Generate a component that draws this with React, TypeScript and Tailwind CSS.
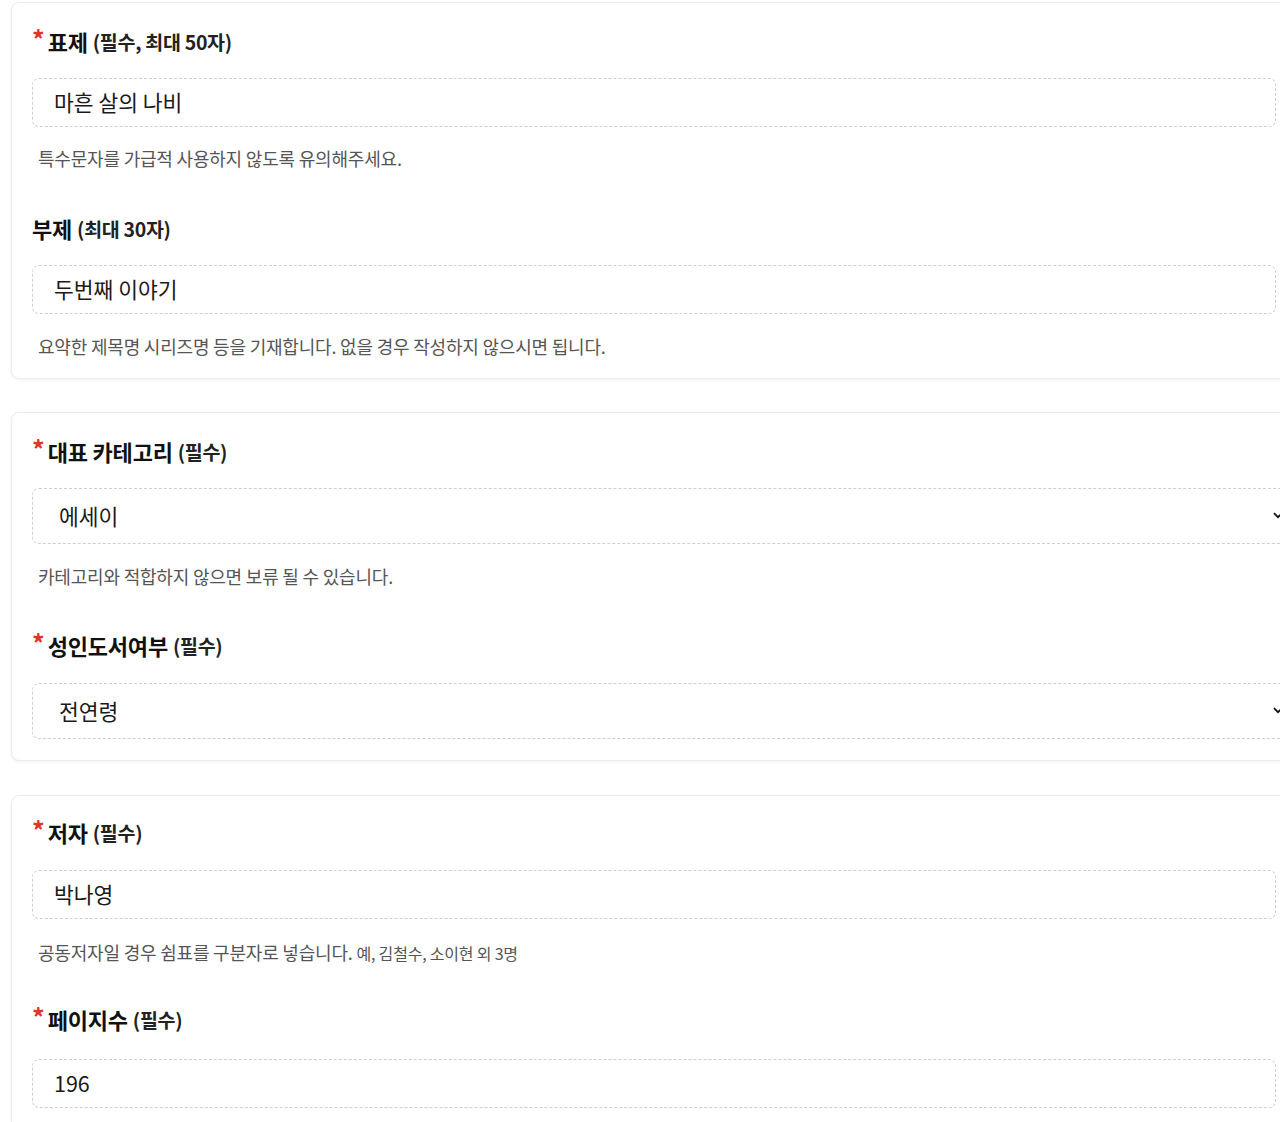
import React from 'react';

const font = '"Noto Sans CJK KR", "Noto Sans", sans-serif';

const Label = ({ title, note, required }: { title: string; note: string; required?: boolean }) => (
  <div className="relative -top-[2px] flex h-[34px] items-center">
    {required && <span className="mr-[3px] -mt-[5px] text-[25px] font-bold leading-none text-[#e0352b]">*</span>}
    <span className="text-[22px] font-bold tracking-[-0.2px] text-[#111]">{title}</span>
    <span className="ml-[5px] mt-[2px] text-[19.5px] font-bold tracking-[-0.3px] text-[#222]">{note}</span>
  </div>
);

const TextBox = ({ value }: { value: string }) => (
  <div className="flex h-[49px] items-center rounded-[7px] border border-dashed border-[#cfcfcf] bg-white pl-[21px] text-[21.5px] text-[#1a1a1a]">
    {value}
  </div>
);

const SelectBox = ({ value }: { value: string }) => (
  <div className="relative flex h-[56px] w-[calc(100%+28px)] items-center rounded-[7px] border border-dashed border-[#cfcfcf] bg-white pl-[26px] text-[21.5px] text-[#1a1a1a]">
    {value}
    <svg className="absolute left-[1240px] top-[23px]" width="10" height="7" viewBox="0 0 10 7">
      <path d="M1 1.2 L5 5.2 L9 1.2" fill="none" stroke="#111" strokeWidth="1.8" />
    </svg>
  </div>
);

const Help = ({ children }: { children: React.ReactNode }) => (
  <p className="h-6 pl-[6px] text-[18px] leading-6 tracking-[-0.2px] text-[#555]">{children}</p>
);

const Card = ({ children, className }: { children: React.ReactNode; className?: string }) => (
  <section className={`w-[1290px] rounded-[8px] border border-[#ececec] bg-white pl-[20px] pr-[24px] shadow-[0_1px_3px_rgba(0,0,0,0.06)] ${className ?? ''}`}>
    {children}
  </section>
);

export default function App() {
  return (
    <div className="h-[1122px] w-[1280px] overflow-hidden bg-white pl-[11px] pt-[2px]" style={{ fontFamily: font }}>
      <Card className="pt-[23px] pb-[20px]">
        <Label required title="표제" note="(필수, 최대 50자)" />
        <div className="mt-[18px]">
          <TextBox value="마흔 살의 나비" />
        </div>
        <div className="mt-[19px]">
          <Help>특수문자를 가급적 사용하지 않도록 유의해주세요.</Help>
        </div>
        <div className="mt-[43px]">
          <Label title="부제" note="(최대 30자)" />
        </div>
        <div className="mt-[18px]">
          <TextBox value="두번째 이야기" />
        </div>
        <div className="mt-[20px]">
          <Help>요약한 제목명 시리즈명 등을 기재합니다. 없을 경우 작성하지 않으시면 됩니다.</Help>
        </div>
      </Card>

      <Card className="mt-[33px] pt-[23px] pb-[21px]">
        <Label required title="대표 카테고리" note="(필수)" />
        <div className="mt-[18px]">
          <SelectBox value="에세이" />
        </div>
        <div className="mt-[20px]">
          <Help>카테고리와 적합하지 않으면 보류 될 수 있습니다.</Help>
        </div>
        <div className="mt-[42px]">
          <Label required title="성인도서여부" note="(필수)" />
        </div>
        <div className="mt-[19px]">
          <SelectBox value="전연령" />
        </div>
      </Card>

      <Card className="mt-[34px] pt-[21px] pb-[20px]">
        <Label required title="저자" note="(필수)" />
        <div className="mt-[19px]">
          <TextBox value="박나영" />
        </div>
        <div className="mt-[21px]">
          <Help>
            공동저자일 경우 쉼표를 구분자로 넣습니다.{' '}
            <span className="text-[16px] tracking-[-0.2px]">예, 김철수, 소이현 외 3명</span>
          </Help>
        </div>
        <div className="mt-[40px]">
          <Label required title="페이지수" note="(필수)" />
        </div>
        <div className="mt-[21px]">
          <TextBox value="196" />
        </div>
      </Card>
    </div>
  );
}
